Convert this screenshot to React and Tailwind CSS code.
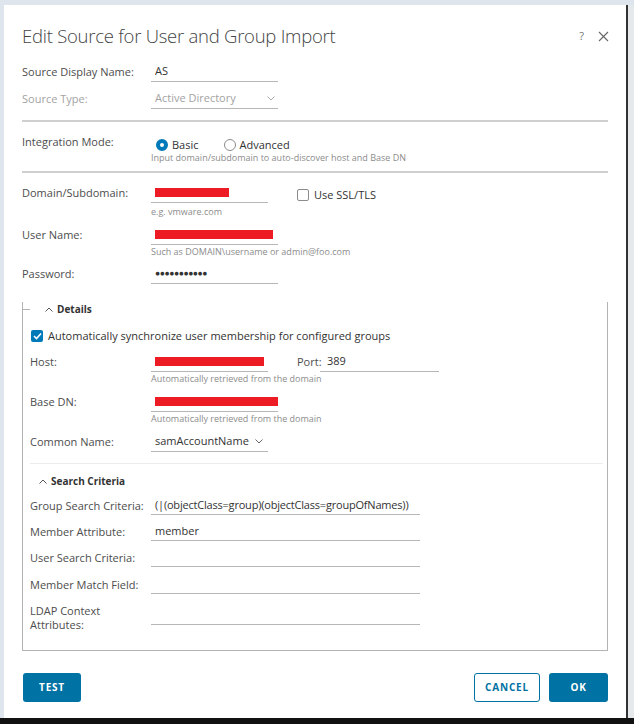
import React from "react";

const FONT = { fontFamily: '"Open Sans", "Liberation Sans", sans-serif' };

function Chevron({ up = false, className = "" }) {
  return (
    <svg width="8" height="5" viewBox="0 0 8 5" className={className}>
      <path
        d={up ? "M0.5 4.5 L4 1 L7.5 4.5" : "M0.5 0.5 L4 4 L7.5 0.5"}
        fill="none"
        stroke="currentColor"
        strokeWidth="1"
      />
    </svg>
  );
}

function Redacted({ w }) {
  return <div className="h-[9px] bg-[#ed1c24]" style={{ width: w }} />;
}

// label + underlined input, label column is fixed so inputs line up
function Field({ label, labelW, inputW, h = 20, mt, children, muted }) {
  return (
    <div className="flex" style={{ marginTop: mt }}>
      <div
        className={`shrink-0 flex items-center text-[11px] ${muted ? "text-[#a3a3a3]" : "text-[#4d4d4d]"}`}
        style={{ width: labelW, height: h }}
      >
        {label}
      </div>
      <div
        className="flex items-center border-b border-[#b7b7b7] pl-[4px] text-[11px] text-[#333]"
        style={{ width: inputW, height: h }}
      >
        {children}
      </div>
    </div>
  );
}

function Helper({ children, mt = 1, ml = 129 }) {
  return (
    <div
      className="h-[12px] leading-[12px] text-[9px] text-[#8c8c8c]"
      style={{ marginTop: mt, marginLeft: ml }}
    >
      {children}
    </div>
  );
}

function Legend({ title, tick }) {
  return (
    <div className="flex items-center h-[14px]">
      {tick ? <div className="w-[8px] h-px bg-[#b3b3b3] -ml-px self-center" /> : null}
      <div className={`flex items-center gap-[4px] text-[10px] font-bold text-[#333] ${tick ? "ml-[15px]" : "ml-[16px]"}`}>
        <Chevron up className="text-[#555]" />
        <span>{title}</span>
      </div>
    </div>
  );
}

export default function App() {
  return (
    <div className="w-[634px] h-[724px] bg-[#dfe5ec] overflow-hidden relative" style={FONT}>
      <div className="flex h-[718px] pt-[5px]">
        <div className="w-[4px]" />
        <div className="w-[622px] h-[713px] bg-white px-[18px] pt-[19px]">
          {/* header */}
          <div className="flex items-center h-[24px]">
            <div className="text-[18.5px] leading-[24px] font-light text-[#444] tracking-[-0.25px]">
              Edit Source for User and Group Import
            </div>
            <div className="ml-auto flex items-center gap-[14px] text-[#777] mr-[-1px]">
              <span className="text-[11px]">?</span>
              <svg width="11" height="11" viewBox="0 0 11 11">
                <path d="M1 1 L10 10 M10 1 L1 10" stroke="#666" strokeWidth="1.1" />
              </svg>
            </div>
          </div>

          <Field label="Source Display Name:" labelW={129} inputW={127} mt={14}>
            AS
          </Field>
          <Field label="Source Type:" labelW={129} inputW={127} mt={7} muted>
            <span className="text-[#a3a3a3]">Active Directory</span>
            <Chevron className="ml-auto mr-[3px] text-[#aaa]" />
          </Field>

          <div className="mt-[11px] h-[2px] bg-[#cfcfcf]" />

          {/* integration mode */}
          <div className="flex mt-[12px]">
            <div className="w-[129px] h-[16px] flex items-center text-[11px] text-[#4d4d4d]">
              Integration Mode:
            </div>
            <div className="pt-[3px]">
              <div className="flex items-center h-[16px] text-[11px] text-[#333] pl-[5px]">
                <div className="w-[12px] h-[12px] rounded-full border-[4px] border-[#0079b8] bg-white" />
                <span className="ml-[4px]">Basic</span>
                <div className="ml-[25px] w-[12px] h-[12px] rounded-full border border-[#8c8c8c]" />
                <span className="ml-[4px]">Advanced</span>
              </div>
              <div className="h-[10px] leading-[10px] text-[9px] text-[#8c8c8c]">
                Input domain/subdomain to auto-discover host and Base DN
              </div>
            </div>
          </div>

          <div className="mt-[8px] h-[2px] bg-[#cfcfcf]" />

          {/* connection */}
          <div className="flex">
            <Field label="Domain/Subdomain:" labelW={129} inputW={117} mt={10}>
              <Redacted w={74} />
            </Field>
            <div className="flex items-center h-[16px] mt-[14px] ml-[29px] text-[11px] text-[#333]">
              <div className="w-[12px] h-[12px] border border-[#8c8c8c] rounded-[2px]" />
              <span className="ml-[5px]">Use SSL/TLS</span>
            </div>
          </div>
          <Helper mt={3}>e.g. vmware.com</Helper>

          <Field label="User Name:" labelW={129} inputW={127} mt={7}>
            <Redacted w={118} />
          </Field>
          <Helper>Such as DOMAIN\username or admin@foo.com</Helper>

          <Field label="Password:" labelW={129} inputW={127} mt={6}>
            <span className="text-[#333] text-[8.5px] tracking-[-0.4px]">●●●●●●●●●●●</span>
          </Field>

          {/* details */}
          <div className="mt-[25px] border-x border-b border-[#b3b3b3] pb-[18px]">
            <div className="-mt-[7px]">
              <Legend title="Details" tick />
            </div>
            <div className="pl-[7px] pr-[4px]">
              <div className="flex items-center h-[16px] mt-[12px] text-[11px] text-[#333]">
                <div className="ml-px w-[12px] h-[12px] rounded-[2px] bg-[#0079b8] flex items-center justify-center">
                  <svg width="9" height="8" viewBox="0 0 9 8">
                    <path d="M1 4 L3.5 6.5 L8 1.5" fill="none" stroke="white" strokeWidth="1.6" />
                  </svg>
                </div>
                <span className="ml-[5px]">Automatically synchronize user membership for configured groups</span>
              </div>

              <div className="flex">
                <Field label="Host:" labelW={121} inputW={117} mt={8}>
                  <Redacted w={109} />
                </Field>
                <div className="flex items-center w-[23px] h-[20px] mt-[8px] ml-[29px] text-[11px] text-[#4d4d4d]">
                  Port:
                </div>
                <div className="flex items-center h-[20px] mt-[8px] w-[119px] border-b border-[#b7b7b7] pl-[7px] text-[11px] text-[#333]">
                  389
                </div>
              </div>
              <Helper ml={121}>Automatically retrieved from the domain</Helper>

              <Field label="Base DN:" labelW={121} inputW={127} mt={7}>
                <Redacted w={124} />
              </Field>
              <Helper ml={121}>Automatically retrieved from the domain</Helper>

              <Field label="Common Name:" labelW={121} inputW={117} mt={7}>
                samAccountName
                <Chevron className="ml-auto mr-[5px] text-[#666]" />
              </Field>

              <div className="mt-[11px] h-px bg-[#ececec]" />

              <div className="mt-[10px] -ml-[7px]">
                <Legend title="Search Criteria" />
              </div>

              <Field label="Group Search Criteria:" labelW={121} inputW={269} h={18} mt={9}>
                <span className="tracking-[-0.2px]">(|(objectClass=group)(objectClass=groupOfNames))</span>
              </Field>
              <Field label="Member Attribute:" labelW={121} inputW={269} h={18} mt={8}>
                member
              </Field>
              <Field label="User Search Criteria:" labelW={121} inputW={269} h={18} mt={8} />
              <Field label="Member Match Field:" labelW={121} inputW={269} h={18} mt={9} />

              <div className="flex mt-[10px]">
                <div className="w-[121px] text-[11px] leading-[14px] text-[#4d4d4d]">
                  <div>LDAP Context</div>
                  <div>Attributes:</div>
                </div>
                <div className="mt-[3px] w-[269px] h-[18px] border-b border-[#b7b7b7]" />
              </div>
            </div>
          </div>

          {/* footer */}
          <div className="flex mt-[22px] text-[10px] font-bold tracking-[0.8px]">
            <button className="w-[58px] h-[29px] ml-px rounded-[3px] bg-[#0072a3] text-white">TEST</button>
            <button className="ml-auto w-[66px] h-[29px] rounded-[3px] border border-[#0072a3] bg-white text-[#0072a3]">
              CANCEL
            </button>
            <button className="ml-[9px] w-[59px] h-[29px] rounded-[3px] bg-[#0072a3] text-white">OK</button>
          </div>
        </div>
        <div className="w-[2px] h-[713px] bg-[#333]" />
        <div className="flex-1 bg-[#e6e9ec]" />
      </div>
      <div className="h-[6px] bg-[#111]" />
    </div>
  );
}
